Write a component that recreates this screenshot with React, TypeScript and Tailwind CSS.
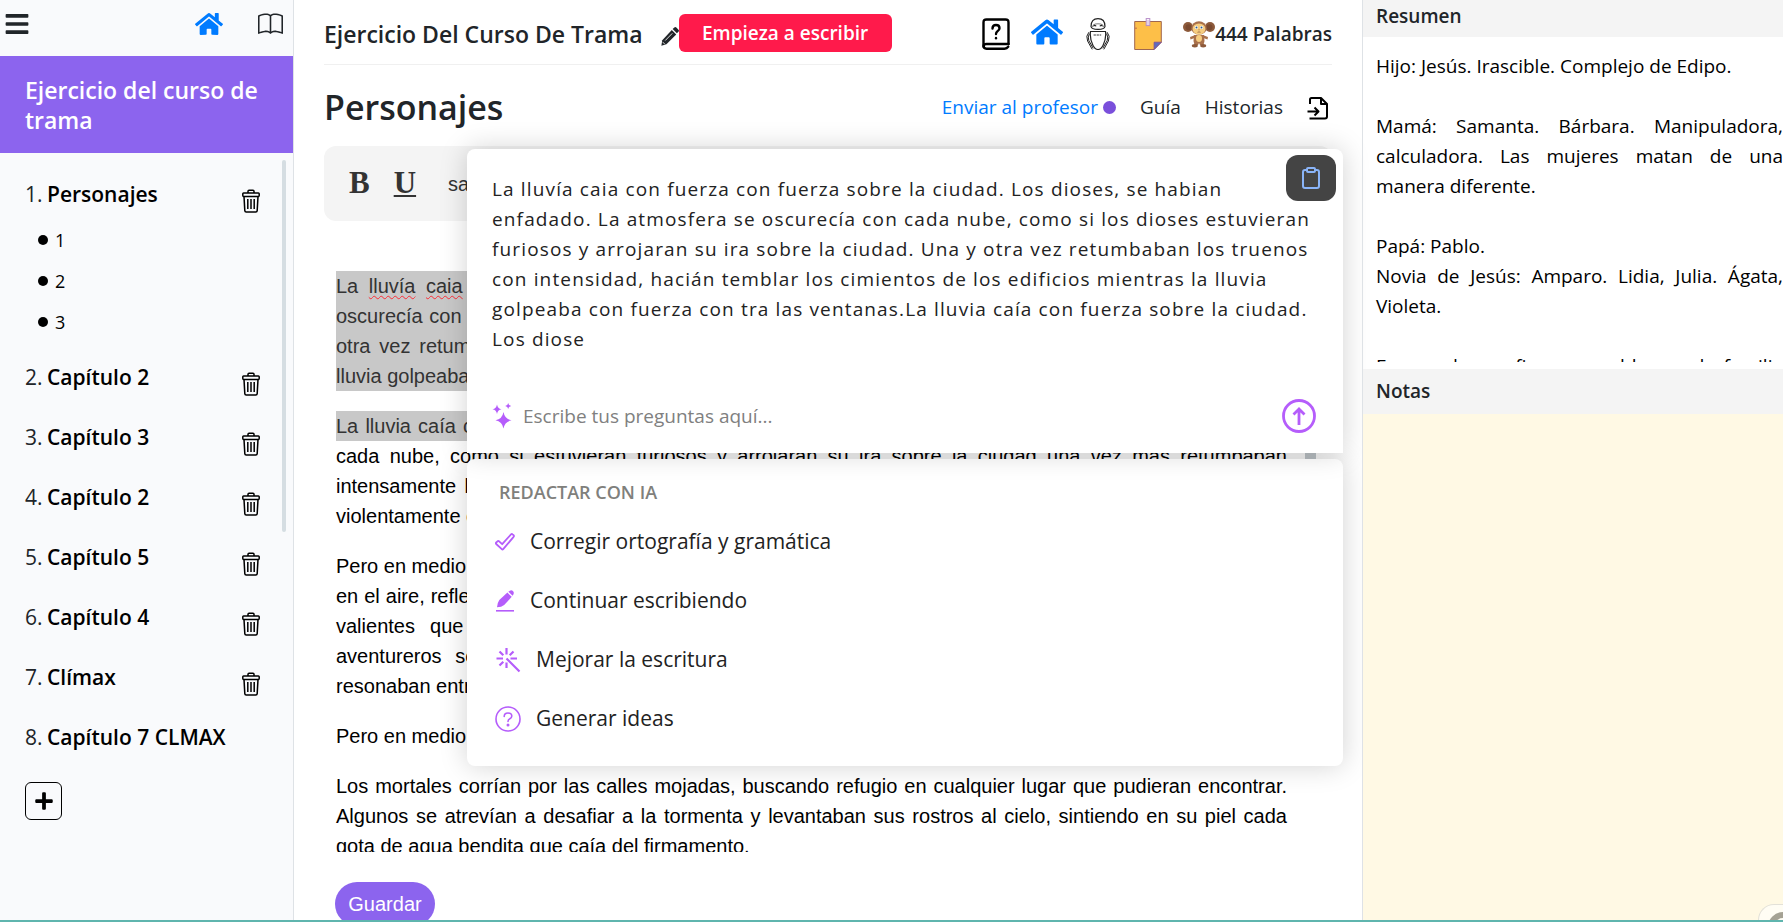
import { ReactNode } from 'react';
import { FaBars, FaHome, FaPlus } from 'react-icons/fa';
import { BsBook } from 'react-icons/bs';
import { Clipboard } from 'lucide-react';

interface Chapter {
    title: string;
    scenes?: string[];
    canDelete: boolean;
}

const chapters: Chapter[] = [
    { title: 'Personajes', scenes: ['1', '2', '3'], canDelete: true },
    { title: 'Capítulo 2', canDelete: true },
    { title: 'Capítulo 3', canDelete: true },
    { title: 'Capítulo 2', canDelete: true },
    { title: 'Capítulo 5', canDelete: true },
    { title: 'Capítulo 4', canDelete: true },
    { title: 'Clímax', canDelete: true },
    { title: 'Capítulo 7 CLMAX', canDelete: false },
];

const suggestion = [
    'La lluvía caia con fuerza con fuerza sobre la ciudad. Los dioses, se habian',
    'enfadado. La atmosfera se oscurecía con cada nube, como si los dioses estuvieran',
    'furiosos y arrojaran su ira sobre la ciudad. Una y otra vez retumbaban los truenos',
    'con intensidad, hacián temblar los cimientos de los edificios mientras la lluvia',
    'golpeaba con fuerza con tra las ventanas.La lluvia caía con fuerza sobre la ciudad.',
    'Los diose',
];

/* Iconos */
function TrashIcon() {
    return (
        <svg className="w-[18px] h-6" viewBox="0 0 18 24" fill="none" stroke="#000" strokeWidth="1.5" strokeLinejoin="round">
            <path d="M6 4V2.2Q6 1.2 7 1.2h4q1 0 1 1V4" />
            <rect x="0.8" y="4" width="16.4" height="3.4" rx="0.8" />
            <path d="M2 7.4L2.8 21.600Q2.900 23 4.200 23H13.800Q15.100 23 15.200 21.600L16 7.400" />
            <path d="M5.800 10v10M9 10v10M12.200 10v10" />
        </svg>
    );
}

function PencilIcon() {
    return (
        <svg className="w-[18px] h-[19px]" viewBox="0 0 17 18">
            <path d="M11 2L12.600.5q1-.9 1.900 0l2 2.100q.9 1 0 1.900L15 6z" fill="#212529" />
            <path d="M10.200 2.800l4.200 4.200-9.300 9.400-4.800 1.300.9-5.200z" fill="#212529" />
            <path d="M4 12.800l6.700-6.800M1.700 14.300l1.900 2" stroke="#fff" strokeWidth=".8" />
        </svg>
    );
}

function BookQuestionIcon() {
    return (
        <svg className="w-7 h-8" viewBox="0 0 28 32" fill="none" stroke="#000" strokeWidth="2.400" strokeLinecap="round" strokeLinejoin="round">
            <path d="M26.500 26V4.500q0-3-3-3h-19q-3 0-3 3v23q0 3.200 3 3.200h18q2.500 0 3.800-2" />
            <path d="M1.500 28.500q0-2.500 3-2.500h22" />
            <path d="M10.500 10.500q0-3.500 3.500-3.500t3.500 3.200q0 1.800-2 3-1.500 1-1.500 2.800" />
            <path d="M14 20v.2" />
        </svg>
    );
}

function RobotIcon() {
    return (
        <svg className="w-6 h-8" viewBox="0 0 24 32" fill="none" stroke="#222" strokeWidth="1.200" strokeLinecap="round">
            <path d="M5 8.500Q5 .7 12 .7T19 8.500Q18.500 11.400 12 11.400T5 8.500z" />
            <path d="M6.500 8.500Q6.500 5.800 12 5.800T17.500 8.500" strokeWidth=".6" />
            <path d="M7.800 7.800q1-1 2 0M14.200 7.800q1-1 2 0" />
            <path d="M4.500 13.500h15q1 7-2.500 14-2 4-5 4t-5-4q-3.500-7-2.500-14z" />
            <path d="M8 17h1.500M11 17h1.500M14 17h.8" strokeWidth=".9" />
            <path d="M2.600 14.500Q-.6 18 1.600 23l4.400 8M3.200 16q-1.800 3-.4 6.500L7 30M21.400 14.500q3.200 3.500 1 8.500L18 31M20.800 16q1.800 3 .4 6.500L17 30" strokeWidth="1" />
        </svg>
    );
}

function StickyNoteIcon() {
    return (
        <svg className="w-7 h-8" viewBox="0 0 28 32">
            <path d="M.7 3.500h26.600v20.700l-7.200 7.300H.7z" fill="#fdbf48" stroke="#a0674f" strokeWidth="1" />
            <path d="M27.300 24.200l-7.200 7.300v-7.300z" fill="#5c6bc0" stroke="#7b4a9a" strokeWidth=".8" />
            <rect x="12.200" y=".6" width="3.600" height="7" fill="#fff" stroke="#b58ac8" strokeWidth="1" />
            <path d="M14 2v5" stroke="#b58ac8" strokeWidth=".8" />
            <path d="M2 9.500v1.500" stroke="#b5524a" strokeWidth="1" />
        </svg>
    );
}

function MonkeyIcon() {
    return (
        <svg className="w-8 h-[27px]" viewBox="0 0 32 27">
            <circle cx="5" cy="6" r="5" fill="#8d5a3b" />
            <circle cx="27" cy="6" r="5" fill="#8d5a3b" />
            <circle cx="5.500" cy="6.200" r="3" fill="#7a4a30" />
            <circle cx="26.500" cy="6.200" r="3" fill="#7a4a30" />
            <path d="M11 14.500L7 16l.5 2.500 4-1.500zM21 14.500l4 1.500-.5 2.500-4-1.500z" fill="#a9714b" />
            <path d="M11 14h10l.5 6-1 4h-3.500L16 22l-1 2h-3.500l-1-4z" fill="#a9714b" />
            <ellipse cx="11.800" cy="24.800" rx="3" ry="1.700" fill="#8d5a3b" />
            <ellipse cx="20.200" cy="24.800" rx="3" ry="1.700" fill="#8d5a3b" />
            <ellipse cx="16" cy="17.500" rx="3" ry="3.400" fill="#f6cd80" />
            <ellipse cx="16" cy="7" rx="7.600" ry="6.800" fill="#a9714b" />
            <ellipse cx="16" cy="8" rx="6.400" ry="5.600" fill="#f6cd80" />
            <circle cx="13.400" cy="6.400" r="1.600" fill="#fff" />
            <circle cx="18.600" cy="6.400" r="1.600" fill="#fff" />
            <circle cx="13.500" cy="6.500" r="1" fill="#2b5a8a" />
            <circle cx="18.500" cy="6.500" r="1" fill="#2b5a8a" />
            <path d="M14.500 11.300q1.500-.8 3 0M15.500 8.800h1" stroke="#8d5a3b" strokeWidth=".8" fill="none" />
        </svg>
    );
}

function ExportIcon() {
    return (
        <svg className="w-[22px] h-6" viewBox="0 0 22 24" fill="none" stroke="#000" strokeWidth="2" strokeLinejoin="round">
            <path d="M3 8V3.500Q3 2 4.500 2H14l6 6v12.500q0 2-2 2H2.500" />
            <path d="M14 2v6h6" />
            <path d="M.500 15.500H11M7.500 11.500l4 4-4 4" />
        </svg>
    );
}

function SparklesIcon() {
    return (
        <svg className="w-5 h-[26px]" viewBox="0 0 20 26" fill="#b55dfb">
            <path d="M11.500 9q1.200 7 8 8.300-6.800 1.300-8 8.300-1.200-7-8-8.300 6.800-1.300 8-8.300z" />
            <path d="M5 1.500q.6 4 4.500 4.800Q5.600 7 5 11 4.400 7 .5 6.300 4.400 5.500 5 1.500z" />
            <path d="M16.200 0q.4 2.600 3 3-2.600.500-3 3.100-.400-2.600-3-3.100 2.600-.4 3-3z" />
        </svg>
    );
}

function SendIcon() {
    return (
        <svg className="w-[34px] h-[34px]" viewBox="0 0 34 34" fill="none" stroke="#b55dfb" strokeWidth="2.800">
            <circle cx="17" cy="17" r="15.500" />
            <path d="M17 26V10M11.500 15.500L17 10l5.500 5.500" />
        </svg>
    );
}

function CheckIcon() {
    return (
        <svg className="w-5 h-5" viewBox="0 0 20 20" fill="none" stroke="#b55dfb" strokeWidth="1.800" strokeLinejoin="round">
            <path d="M1.200 10.500l1.300-1.200q.8-.7 1.600 0l3.100 2.900L16 2.400q.8-.8 1.600 0l1 .8q.7.700 0 1.600L8.200 17.200q-.7.800-1.400 0L1.200 12q-.7-.8 0-1.500z" />
        </svg>
    );
}

function WriteIcon() {
    return (
        <svg className="w-5 h-[22px]" viewBox="0 0 20 22" fill="#b55dfb">
            <path d="M12.400 2.600l4.300 4.200-7.500 8.300q-2.700 2.200-7.200 2.200.300-4.500 2.300-7.200z" />
            <path d="M13.400 1.800q2.500-2.600 4.500-.8 2 2 -.3 4.800z" />
            <rect x="1" y="20" width="18" height="1.600" />
        </svg>
    );
}

function WandIcon() {
    return (
        <svg className="w-[26px] h-[26px]" viewBox="0 0 26 26" fill="none" stroke="#b55dfb" strokeWidth="2.200">
            <path d="M11.500 11.500l13 13M11.500 1v6.500M11.500 15.500V21M1.500 11.500H8M15.500 11.500H22M4.500 4.500L8.300 8.300M18.500 4.500l-3.800 3.800M4.500 18.500l3.800-3.800" />
        </svg>
    );
}

function HelpIcon() {
    return (
        <svg className="w-[26px] h-[26px]" viewBox="0 0 26 26" fill="none" stroke="#b55dfb" strokeWidth="1.600" strokeLinecap="round">
            <circle cx="13" cy="13" r="12" />
            <path d="M9.200 10.500Q9.200 7 13 7t3.800 3q0 1.700-2 2.800-1.800.9-1.800 2.700" />
            <circle cx="13" cy="19" r=".7" fill="#b55dfb" />
        </svg>
    );
}

function Line({ children }: { children: ReactNode }) {
    return <span className="block whitespace-nowrap [text-align-last:justify]">{children}</span>;
}

function Misspelled({ children }: { children: ReactNode }) {
    return <span className="underline decoration-wavy decoration-red-500 decoration-1 underline-offset-2">{children}</span>;
}

function Sidebar() {
    return (
        <aside className="w-[294px] shrink-0 bg-[#f9fafc] border-r border-[#dee2e6] flex flex-col">
            <div className="h-14 shrink-0 pl-[5px] pr-2.5 pb-2 flex items-center">
                <button aria-label="Menú" className="text-[#212529]"><FaBars className="w-6 h-[26px]" /></button>
                <a href="#inicio" aria-label="Inicio" className="ml-auto text-[#007bff]"><FaHome className="w-7 h-7" /></a>
                <a href="#libro" aria-label="Libro" className="ml-[35px] text-[#212529]"><BsBook className="w-[25px] h-[25px]" /></a>
            </div>
            <h2 className="bg-[#8c64ee] text-white text-[23px] leading-[30px] font-semibold px-[25px] pt-[19px] pb-[18px]">
                Ejercicio del curso de trama
            </h2>
            <nav className="relative flex-1 pt-[18px] pl-[25px] pr-[33px]">
                <ol className="flex flex-col gap-3">
                    {chapters.map((chapter, i) => (
                        <li key={i}>
                            <div className="h-12 flex items-center">
                                <span className="w-[22px] text-[21px] font-medium text-[#212529]">{i + 1}.</span>
                                <a href="#capitulo" className="text-[21px] font-semibold text-black whitespace-nowrap">{chapter.title}</a>
                                {chapter.canDelete && (
                                    <button aria-label="Eliminar" className="ml-auto pt-3"><TrashIcon /></button>
                                )}
                            </div>
                            {chapter.scenes && (
                                <ul>
                                    {chapter.scenes.map((scene) => (
                                        <li key={scene} className="h-[41px] pl-[13px] flex items-center gap-[7px] text-lg text-black">
                                            <span className="w-2.5 h-2.5 rounded-full bg-black"></span>
                                            {scene}
                                        </li>
                                    ))}
                                </ul>
                            )}
                        </li>
                    ))}
                </ol>
                <button aria-label="Añadir capítulo" className="mt-5 w-[37px] h-[38px] border border-black rounded-md flex items-center justify-center text-black">
                    <FaPlus className="w-5 h-5" />
                </button>
                <div className="absolute top-[7px] right-[7px] w-1 h-[372px] rounded-full bg-[#d5dde2]"></div>
            </nav>
        </aside>
    );
}

function AssistantPopup() {
    return (
        <div className="absolute top-[149px] left-[173px] right-[19px] flex flex-col gap-1.5">
            <div className="relative bg-white rounded-t-lg shadow-[0_0_28px_rgba(0,0,0,0.18)] pt-[25px] pl-[25px] pr-[27px] h-[304px]">
                <p className="text-[19px] leading-[30px] tracking-[0.06em] text-[#222]">
                    {suggestion.map((line) => (
                        <span key={line} className="block whitespace-nowrap">{line}</span>
                    ))}
                </p>
                <button aria-label="Copiar" className="absolute top-1.5 right-[7px] w-[50px] h-[46px] rounded-xl bg-[#444] flex items-center justify-center">
                    <Clipboard className="w-6 h-6 text-[#8ab4f8]" />
                </button>
                <div className="mt-[45px] flex items-center">
                    <SparklesIcon />
                    <input aria-label="Pregunta" placeholder="Escribe tus preguntas aquí..." className="ml-[11px] flex-1 text-[19px] text-[#222] placeholder:text-[#808080] outline-none" />
                    <button aria-label="Enviar"><SendIcon /></button>
                </div>
            </div>
            <div className="bg-white rounded-lg shadow-[0_0_28px_rgba(0,0,0,0.18)] pl-7 pt-[18px] h-[307px]">
                <h3 className="ml-1 text-lg leading-[30px] font-semibold text-[#80807c]">REDACTAR CON IA</h3>
                <div className="mt-[5px] flex flex-col text-[21px] text-[#222]">
                    <button className="h-[59px] flex items-center gap-[15px]"><CheckIcon />Corregir ortografía y gramática</button>
                    <button className="h-[59px] flex items-center gap-[15px]"><WriteIcon />Continuar escribiendo</button>
                    <button className="h-[59px] flex items-center gap-[15px]"><WandIcon />Mejorar la escritura</button>
                    <button className="h-[59px] flex items-center gap-[15px]"><HelpIcon />Generar ideas</button>
                </div>
            </div>
        </div>
    );
}

function Editor() {
    return (
        <main className="relative flex-1 min-w-0 px-[30px] flex flex-col">
            <header className="h-[65px] shrink-0 border-b border-[#f0f0f0] flex items-center pt-1 text-[#212529]">
                <h1 className="text-[23px] font-semibold whitespace-nowrap">Ejercicio Del Curso De Trama</h1>
                <button aria-label="Editar título" className="ml-[18px] pt-1"><PencilIcon /></button>
                <button className="w-[213px] h-[38px] mb-0.5 bg-[#ff1a4b] text-white text-[19px] font-semibold rounded-md whitespace-nowrap">Empieza a escribir</button>
                <div className="ml-auto flex items-center">
                    <button aria-label="Ayuda"><BookQuestionIcon /></button>
                    <a href="#inicio" aria-label="Inicio" className="ml-[21px] pb-1 text-[#007bff]"><FaHome className="w-8 h-8" /></a>
                    <button aria-label="Asistente" className="ml-[23px]"><RobotIcon /></button>
                    <button aria-label="Notas" className="ml-6"><StickyNoteIcon /></button>
                    <span className="ml-[21px]"><MonkeyIcon /></span>
                    <span className="text-[19px] font-semibold whitespace-nowrap">444 Palabras</span>
                </div>
            </header>

            <div className="h-[81px] shrink-0 flex items-center pt-1 text-[19px] text-[#212529]">
                <h2 className="text-[34px] font-semibold mr-auto">Personajes</h2>
                <a href="#profesor" className="text-[#007bff]">Enviar al profesor</a>
                <span className="ml-[5px] w-[13px] h-[13px] rounded-full bg-[#7a4fdb]"></span>
                <a href="#guia" className="ml-6">Guía</a>
                <a href="#historias" className="ml-6">Historias</a>
                <button aria-label="Exportar" className="ml-6 mr-[3px]"><ExportIcon /></button>
            </div>

            {/* Barra de herramientas */}
            <div className="h-[75px] shrink-0 bg-[#f4f4f4] rounded-xl pl-[25px] flex items-center text-[#333]">
                <button className="font-['Liberation_Serif',serif] font-bold text-[31px]">B</button>
                <button className="ml-6 font-['Liberation_Serif',serif] font-bold text-[31px] underline decoration-2 underline-offset-2">U</button>
                <button className="ml-8 font-['Liberation_Sans',sans-serif] text-xl">sans</button>
            </div>

            {/* Texto del capítulo */}
            <article className="relative flex-1 min-h-0 overflow-hidden mt-5 pt-[30px] pl-3 pr-[45px] flex flex-col gap-5 font-['Liberation_Sans',sans-serif] text-xl leading-[30px] text-black">
                <p className="bg-[#c8c8c8] text-[#333]">
                    <Line>La <Misspelled>lluvía</Misspelled> <Misspelled>caia</Misspelled> con fuerza sobre la ciudad. Los dioses, se habian enfadado. La atmosfera terrible se</Line>
                    <Line>oscurecía con cada nube, como si los dioses estuvieran furiosos y arrojaran su ira sobre la ciudad. Una y</Line>
                    <Line>otra vez retumbaban los truenos con intensidad, hacián temblar los cimientos de la ciudad mientras la</Line>
                    <span className="block">lluvia golpeaba con fuerza contra las ventanas.</span>
                </p>
                <p>
                    <span className="block bg-[#c8c8c8] text-[#333]"><Line>La lluvia caía con fuerza sobre la ciudad. Los dioses, enfadados, y la atmósfera se oscurecía entera con</Line></span>
                    <Line>cada nube, como si estuvieran furiosos y arrojaran su ira sobre la ciudad una vez más retumbaban</Line>
                    <Line>intensamente los truenos, haciendo temblar los cimientos mientras la lluvia golpeaba con fuerza y muy</Line>
                    <span className="block">violentamente contra las ventanas.</span>
                </p>
                <p>
                    <Line>Pero en medio de la tormenta, había una extraña belleza. Los relámpagos iluminaban y bailaban todos juntos</Line>
                    <Line>en el aire, reflejándose en los charcos que se formaban en las calles. Solo los hombres más fuertes y muy</Line>
                    <Line>valientes que salían a la calle podían ver todo aquel espectáculo de luces y sombras y los</Line>
                    <Line>aventureros se detenían a escuchar el rugido de los truenos lejanos, mientras todas sus voces</Line>
                    <span className="block">resonaban entre los edificios.</span>
                </p>
                <p>Pero en medio de la tormenta, había una extraña belleza.</p>
                <p>
                    <Line>Los mortales corrían por las calles mojadas, buscando refugio en cualquier lugar que pudieran encontrar.</Line>
                    <Line>Algunos se atrevían a desafiar a la tormenta y levantaban sus rostros al cielo, sintiendo en su piel cada</Line>
                    <span className="block">gota de agua bendita que caía del firmamento.</span>
                </p>
                <div className="absolute top-6 right-4 w-[11px] h-96 bg-[#c2c9cd]"></div>
            </article>

            <div className="h-[68px] shrink-0 pt-[30px] pl-[11px] overflow-hidden">
                <button className="w-[100px] h-[44px] bg-[#8c64ee] text-white rounded-full font-['Liberation_Sans',sans-serif] text-xl">Guardar</button>
            </div>

            <AssistantPopup />
        </main>
    );
}

function NotesPanel() {
    return (
        <aside className="relative w-[421px] shrink-0 border-l border-[#dee2e6] flex flex-col overflow-hidden">
            <h3 className="h-[37px] shrink-0 bg-[#f4f4f4] pl-[13px] pb-1 flex items-center text-[19px] font-semibold text-[#212529]">Resumen</h3>
            <div className="h-[325px] shrink-0 overflow-hidden pt-3.5 pl-[13px] text-[19px] leading-[30px] text-black text-justify">
                <p>Hijo: Jesús. Irascible. Complejo de Edipo.</p>
                <p className="mt-[30px]">Mamá: Samanta. Bárbara. Manipuladora, calculadora. Las mujeres matan de una manera diferente.</p>
                <p className="mt-[30px]">Papá: Pablo.</p>
                <p>Novia de Jesús: Amparo. Lidia, Julia. Ágata, Violeta.</p>
                <p className="mt-[30px]">Es una de sus figuras, problemas de familia en su casa cuando todos están reunidos.</p>
            </div>
            <h3 className="mt-[7px] h-[45px] shrink-0 bg-[#f4f4f4] pl-[13px] flex items-center text-[19px] font-semibold text-[#212529]">Notas</h3>
            <textarea aria-label="Notas" className="flex-1 w-full bg-[#fff9e4] resize-none outline-none p-3 text-lg"></textarea>
            {/* Botón flotante, asoma por la esquina */}
            <div className="absolute bottom-0 right-0 w-[25px] h-4 overflow-hidden rounded-tl-2xl border-t border-l border-[#e3e1d8] bg-[#fffdf4]">
                <div className="ml-[9px] mt-[7px] w-[30px] h-[30px] rounded-full border-[6px] border-[#a5a294]"></div>
            </div>
        </aside>
    );
}

export default function App() {
    return (
        <div className="h-screen flex flex-col overflow-hidden bg-white font-['Open_Sans','Noto_Sans',sans-serif]">
            <div className="flex-1 min-h-0 flex">
                <Sidebar />
                <Editor />
                <NotesPanel />
            </div>
            <div className="h-0.5 shrink-0 bg-[#5fb5ae]"></div>
        </div>
    );
}
